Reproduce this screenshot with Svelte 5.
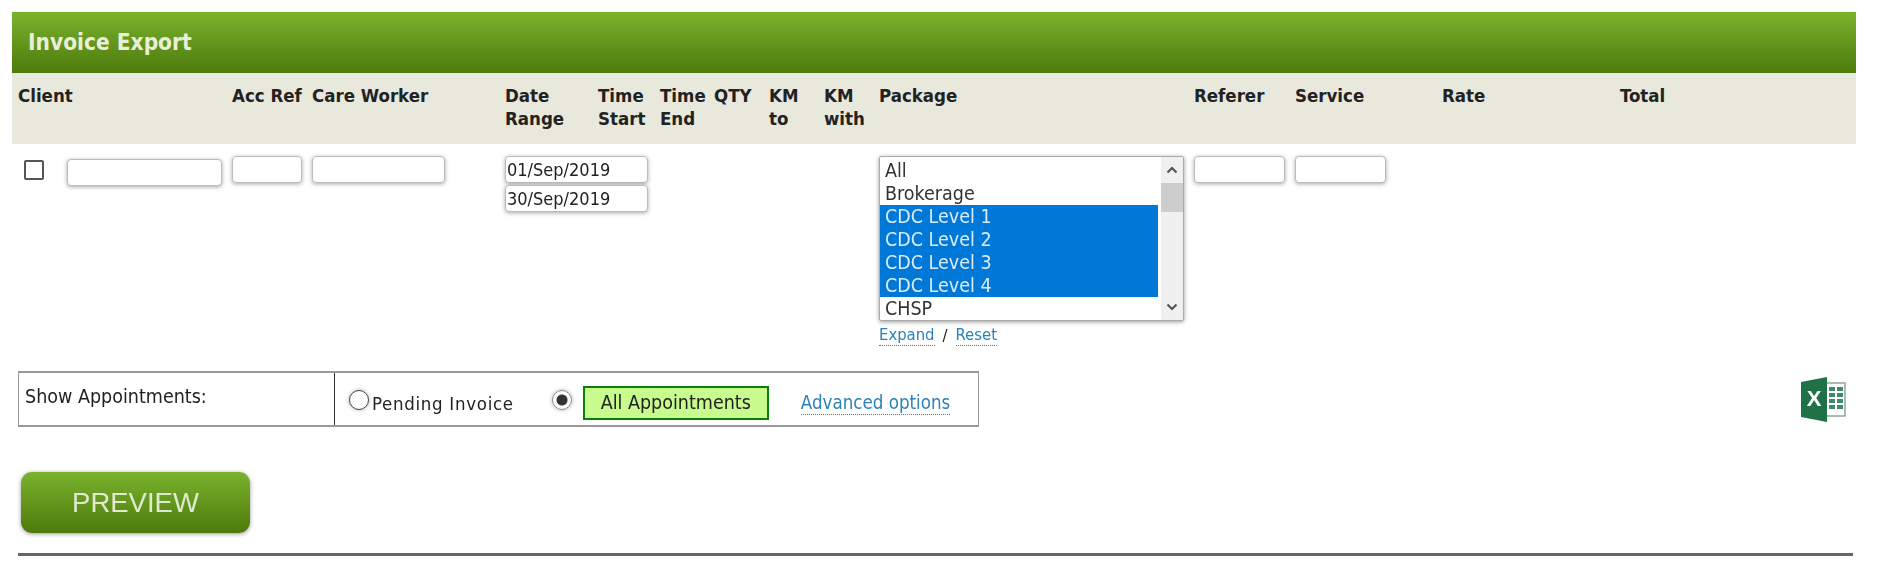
<script>
  const headers = [
    ['Client'],
    ['Acc Ref'],
    ['Care Worker'],
    ['Date', 'Range'],
    ['Time', 'Start'],
    ['Time', 'End'],
    ['QTY'],
    ['KM', 'to'],
    ['KM', 'with'],
    ['Package'],
    ['Referer'],
    ['Service'],
    ['Rate'],
    ['Total']
  ];
  const packages = [
    { name: 'All', selected: false },
    { name: 'Brokerage', selected: false },
    { name: 'CDC Level 1', selected: true },
    { name: 'CDC Level 2', selected: true },
    { name: 'CDC Level 3', selected: true },
    { name: 'CDC Level 4', selected: true },
    { name: 'CHSP', selected: false }
  ];
</script>

<main class="page">
  <h1 class="title">Invoice Export</h1>

  <div class="grid head">
    {#each headers as lines}
      <div class="th">
        {#each lines as line}<div>{line}</div>{/each}
      </div>
    {/each}
  </div>

  <div class="grid filters">
    <div class="td client">
      <input type="checkbox" class="check" />
      <input class="field" type="text" />
    </div>
    <div class="td"><input class="field" type="text" /></div>
    <div class="td"><input class="field care" type="text" /></div>
    <div class="td dates">
      <input class="field" type="text" value="01/Sep/2019" />
      <input class="field" type="text" value="30/Sep/2019" />
    </div>
    <div></div>
    <div></div>
    <div></div>
    <div></div>
    <div></div>
    <div class="td">
      <div class="listbox">
        <div class="options">
          {#each packages as p}
            <div class="option" class:selected={p.selected}>{p.name}</div>
          {/each}
        </div>
        <div class="scrollbar">
          <svg width="14" height="10" viewBox="0 0 14 10"><path d="M2.5 7.5 7 3l4.5 4.5" fill="none" stroke="#555" stroke-width="2.2" /></svg>
          <div class="thumb"></div>
          <div class="track"></div>
          <svg width="14" height="10" viewBox="0 0 14 10"><path d="M2.5 2.5 7 7l4.5-4.5" fill="none" stroke="#555" stroke-width="2.2" /></svg>
        </div>
      </div>
      <div class="list-links"><a href="#expand">Expand</a><span>/</span><a href="#reset">Reset</a></div>
    </div>
    <div class="td"><input class="field short" type="text" /></div>
    <div class="td"><input class="field short" type="text" /></div>
    <div></div>
    <div></div>
  </div>

  <div class="options-row">
    <div class="show-box">
      <div class="show-label">Show Appointments:</div>
      <div class="show-choices">
        <span class="radio"></span>
        <span class="pending">Pending Invoice</span>
        <span class="radio on"></span>
        <span class="all">All Appointments</span>
        <a class="advanced" href="#advanced">Advanced options</a>
      </div>
    </div>
    <svg class="excel" width="46" height="45" viewBox="0 0 46 45">
      <rect x="24" y="6" width="21" height="33" fill="#fff" stroke="#8aa79a" stroke-width="1.5" />
      <g fill="#3f8a68">
        <rect x="29" y="10" width="6" height="4" /><rect x="37" y="10" width="6" height="4" />
        <rect x="29" y="16" width="6" height="4" /><rect x="37" y="16" width="6" height="4" />
        <rect x="29" y="22" width="6" height="4" /><rect x="37" y="22" width="6" height="4" />
        <rect x="29" y="28" width="6" height="4" /><rect x="37" y="28" width="6" height="4" />
      </g>
      <path d="M1 5 27 0v45L1 40z" fill="#1f7247" />
      <text x="14" y="29" text-anchor="middle" class="excel-x">X</text>
    </svg>
  </div>

  <button class="preview" type="button">PREVIEW</button>

  <hr class="rule" />
</main>

<style>
  :global(body) {
    margin: 0;
    background: #fff;
  }

  .page {
    height: 565px;
    box-sizing: border-box;
    padding-top: 12px;
    overflow: hidden;
    font-family: "DejaVu Sans Condensed", "DejaVu Sans", sans-serif;
    font-size: 18px;
    color: #222;
    filter: blur(0.4px);
  }

  .title {
    margin: 0 21px 0 12px;
    height: 61px;
    box-sizing: border-box;
    padding: 17px 0 0 16px;
    font-size: 22.5px;
    line-height: 26px;
    font-weight: 700;
    color: #e8efd8;
    background: linear-gradient(#7ab32e, #4d7a0c);
  }

  .grid {
    display: grid;
    grid-template-columns: 214px 80px 193px 93px 62px 54px 55px 55px 55px 315px 101px 147px 178px 1fr;
    margin: 0 21px 0 12px;
  }

  .head {
    height: 71px;
    box-sizing: border-box;
    padding-top: 11px;
    background: #e9e8dc;
    font-size: 18.5px;
    font-weight: 700;
    line-height: 23px;
  }

  .th {
    padding-left: 6px;
    white-space: nowrap;
  }

  .filters {
    padding-top: 12px;
  }

  .td {
    padding: 0 4px 0 6px;
  }

  .client {
    display: flex;
    align-items: flex-start;
    padding-top: 3px;
    padding-left: 12px;
  }

  .check {
    appearance: none;
    flex: none;
    width: 20px;
    height: 20px;
    margin: 1px 23px 0 0;
    border: 2px solid #555;
    border-radius: 2px;
    background: #fff;
  }

  .field {
    display: block;
    width: 100%;
    height: 27px;
    box-sizing: border-box;
    padding: 0 1px;
    border: 1px solid #bbb;
    border-radius: 4px;
    background: #fff;
    box-shadow: 0 1px 4px rgba(0, 0, 0, 0.35);
    font: inherit;
    color: #222;
  }

  .client .field {
    width: 155px;
  }

  .field.care {
    width: 133px;
  }

  .field.short {
    width: 91px;
  }

  .dates {
    padding-right: 0;
    width: 143px;
  }

  .dates .field + .field {
    margin-top: 2px;
  }

  .listbox {
    display: flex;
    width: 305px;
    height: 165px;
    box-sizing: border-box;
    border: 1px solid #aaa;
    border-radius: 2px;
    box-shadow: 0 1px 4px rgba(0, 0, 0, 0.4);
    background: #fff;
    overflow: hidden;
  }

  .options {
    flex: 1;
    padding-top: 2px;
  }

  .option {
    height: 23px;
    line-height: 23px;
    padding-left: 5px;
    margin-right: 3px;
    font-size: 19.5px;
    color: #333;
  }

  .option.selected {
    background: #0078d7;
    color: #dcebf8;
  }

  .scrollbar {
    flex: none;
    width: 22px;
    display: flex;
    flex-direction: column;
    align-items: center;
    background: #f0f0f0;
  }

  .scrollbar svg {
    flex: none;
    margin: 8px 0;
  }

  .thumb {
    flex: none;
    width: 100%;
    height: 29px;
    background: #cdcdcd;
  }

  .track {
    flex: 1;
  }

  .list-links {
    display: flex;
    gap: 8px;
    margin-top: 3px;
    font-size: 16.5px;
    line-height: 24px;
  }

  a {
    color: #2b83b8;
    text-decoration: none;
    border-bottom: 1px dotted #2b83b8;
  }

  .list-links a {
    line-height: 21px;
    height: 21px;
  }

  .options-row {
    display: flex;
    justify-content: space-between;
    align-items: center;
    margin-top: 23px;
    padding: 0 31px 0 18px;
  }

  .show-box {
    display: flex;
    width: 961px;
    height: 56px;
    box-sizing: border-box;
    border: 1px solid #999;
    border-top-width: 2px;
    border-bottom-width: 2px;
  }

  .show-label {
    width: 316px;
    flex: none;
    box-sizing: border-box;
    padding: 12px 0 0 6px;
    border-right: 1px solid #333;
    font-size: 19.5px;
  }

  .show-choices {
    display: flex;
    align-items: center;
    padding: 8px 0 0 14px;
    font-size: 18.5px;
  }

  .radio {
    flex: none;
    width: 18px;
    height: 18px;
    margin-top: -6px;
    border: 1px solid #444;
    border-radius: 50%;
    background: #fff;
    box-shadow: 0 0 4px rgba(0, 0, 0, 0.3);
  }

  .radio.on {
    margin-left: 38px;
    background: radial-gradient(circle, #333 0 5px, #fff 6px);
    border-color: #888;
  }

  .pending {
    margin-left: 3px;
    letter-spacing: 0.7px;
  }

  .all {
    margin-left: 11px;
    width: 186px;
    height: 34px;
    box-sizing: border-box;
    border: 2px solid #0b7d0b;
    background: #c7fb8e;
    font-size: 19.5px;
    line-height: 30px;
    text-align: center;
  }

  .advanced {
    margin-left: 32px;
    font-size: 18.6px;
    line-height: 22px;
  }

  .excel-x {
    font-family: "Liberation Sans", sans-serif;
    font-size: 22px;
    font-weight: 700;
    fill: #fff;
  }

  .preview {
    display: block;
    width: 229px;
    height: 61px;
    margin: 45px 0 0 21px;
    border: 0;
    border-radius: 11px;
    background: linear-gradient(#7ab32e, #4d7a0c);
    box-shadow: 0 1px 4px rgba(0, 0, 0, 0.4);
    color: #dfe9cf;
    font-family: "Liberation Sans", sans-serif;
    font-size: 27.5px;
  }

  .rule {
    height: 3px;
    margin: 20px 24px 0 18px;
    border: 0;
    background: #666;
  }
</style>
